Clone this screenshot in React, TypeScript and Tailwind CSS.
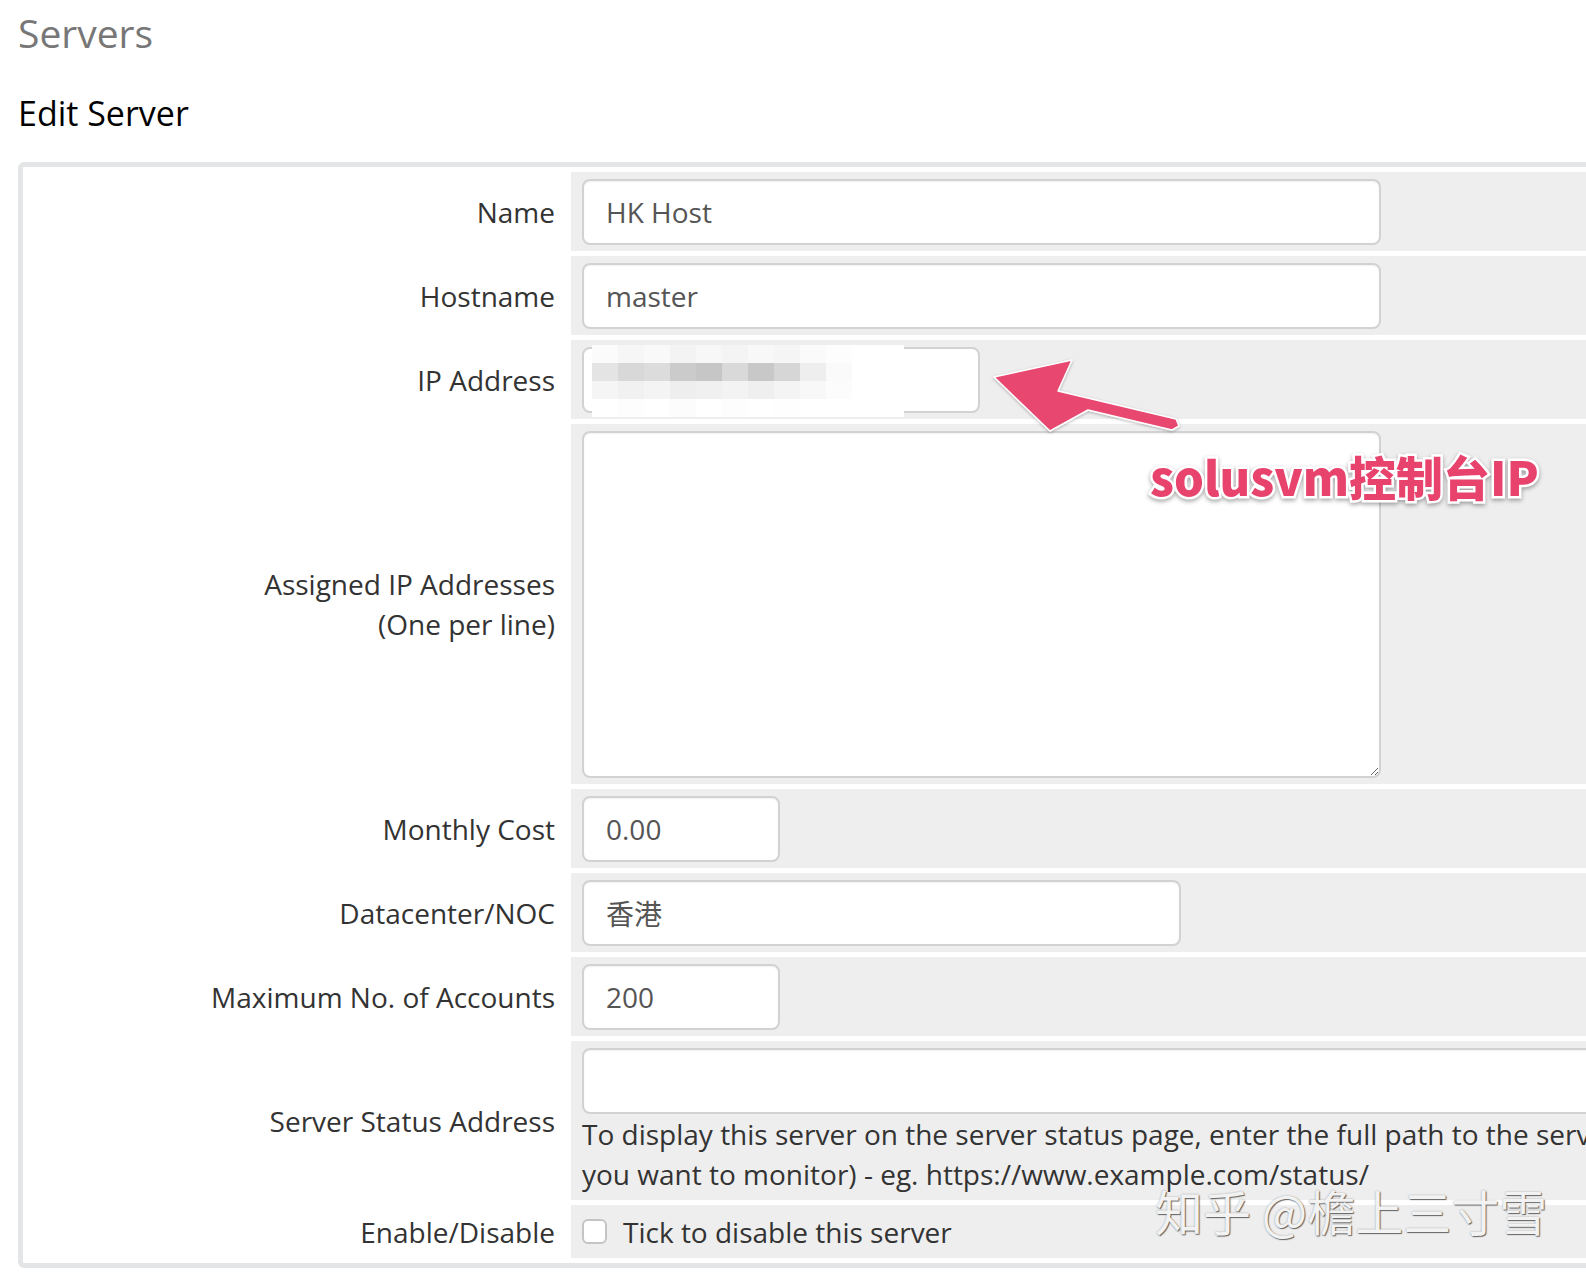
import React from "react";

const font = { fontFamily: '"Open Sans", "Noto Sans CJK SC", sans-serif' };

const mosaic = [
  ["#fbfbfb", "#f6f6f6", "#f9f9f9", "#f3f3f3", "#f7f7f7", "#f4f4f4", "#f8f8f8", "#f5f5f5", "#fafafa", "#fdfdfd", "#ffffff", "#ffffff"],
  ["#e4e4e4", "#d8d8d8", "#dcdcdc", "#cbcbcb", "#c6c6c6", "#d9d9d9", "#c8c8c8", "#d6d6d6", "#eeeeee", "#fafafa", "#ffffff", "#ffffff"],
  ["#f5f5f5", "#f1f1f1", "#f4f4f4", "#eeeeee", "#f0f0f0", "#f3f3f3", "#efefef", "#f4f4f4", "#f8f8f8", "#fcfcfc", "#ffffff", "#ffffff"],
  ["#ffffff", "#fdfdfd", "#ffffff", "#fcfcfc", "#ffffff", "#fdfdfd", "#ffffff", "#fefefe", "#ffffff", "#ffffff", "#ffffff", "#ffffff"],
];

const inputCls =
  "h-[66px] rounded-[8px] border-2 border-[#d2d2d2] bg-white pl-[22px] text-[28px] text-[#555] shadow-[inset_0_1px_2px_rgba(0,0,0,0.06)] outline-none";

function Row({ label, children }: { label: React.ReactNode; children: React.ReactNode }) {
  return (
    <div className="flex">
      <div className="w-[548px] shrink-0 flex items-center justify-end pr-[16px] text-right text-[28px] leading-[40px] text-[#333]">
        {label}
      </div>
      <div className="flex-1 bg-[#eeeeee] pl-[11px] pt-[7px] pb-[6px]">{children}</div>
    </div>
  );
}

export default function App() {
  return (
    <div className="relative w-[1586px] h-[1276px] overflow-hidden bg-white" style={font}>
      <div className="pl-[18px]">
        <div className="h-[66px] leading-[66px] text-[39px] text-[#777]">Servers</div>
        <div className="mt-[27px] leading-[40px] text-[34px] text-black">Edit Server</div>

        <div className="mt-[29px] w-[1800px] rounded-[6px] border-[5px] border-[#e3e5e6] py-[5px]">
          <div className="flex flex-col gap-[5px]">
            <Row label="Name">
              <input readOnly value="HK Host" className={`${inputCls} w-[799px]`} />
            </Row>
            <Row label="Hostname">
              <input readOnly value="master" className={`${inputCls} w-[799px]`} />
            </Row>
            <Row label="IP Address">
              <div className="relative h-[66px] w-[398px] rounded-[8px] border-2 border-[#d2d2d2] bg-white">
                <div className="absolute left-[8px] top-[-4px] flex flex-col">
                  {mosaic.map((r, i) => (
                    <div key={i} className="flex">
                      {r.map((c, j) => (
                        <div key={j} className="h-[18px] w-[26px]" style={{ background: c }} />
                      ))}
                    </div>
                  ))}
                </div>
              </div>
            </Row>
            <Row
              label={
                <span>
                  Assigned IP Addresses
                  <br />
                  (One per line)
                </span>
              }
            >
              <textarea
                readOnly
                className="block h-[347px] w-[799px] rounded-[8px] border-2 border-[#d2d2d2] bg-white shadow-[inset_0_1px_2px_rgba(0,0,0,0.06)] outline-none"
              />
            </Row>
            <Row label="Monthly Cost">
              <input readOnly value="0.00" className={`${inputCls} w-[198px]`} />
            </Row>
            <Row label="Datacenter/NOC">
              <input readOnly value="香港" className={`${inputCls} w-[599px]`} />
            </Row>
            <Row label="Maximum No. of Accounts">
              <input readOnly value="200" className={`${inputCls} w-[198px]`} />
            </Row>
            <Row label="Server Status Address">
              <input readOnly value="" className={`${inputCls} block w-[1200px]`} />
              <div className="whitespace-nowrap text-[28px] leading-[40px] text-[#333]">
                To display this server on the server status page, enter the full path to the server status folder
                (required to be uploaded to each server
                <br />
                you want to monitor) - eg. https://www.example.com/status/
              </div>
            </Row>
            <div className="flex">
              <div className="w-[548px] shrink-0 flex items-center justify-end pr-[16px] text-[28px] text-[#333]">
                Enable/Disable
              </div>
              <div className="flex flex-1 items-center gap-[16px] bg-[#eeeeee] pl-[11px] h-[53px]">
                <div className="h-[25px] w-[25px] rounded-[6px] border-2 border-[#c4c4c4] bg-white" />
                <span className="text-[28px] text-[#333]">Tick to disable this server</span>
              </div>
            </div>
          </div>
        </div>
      </div>

      {/* annotation arrow */}
      <svg className="absolute left-0 top-0" width="1586" height="1276" viewBox="0 0 1586 1276">
        <defs>
          <filter id="sh" x="-20%" y="-20%" width="140%" height="140%">
            <feDropShadow dx="0" dy="1" stdDeviation="1.5" floodColor="#000" floodOpacity="0.3" />
          </filter>
        </defs>
        <polygon
          points="994,377 1072,360 1058,391 1176,419 1179,426 1172,430 1088,410 1050,431"
          fill="#e8466f"
          stroke="#fff"
          strokeWidth="1.5"
          strokeLinejoin="round"
          filter="url(#sh)"
        />
      </svg>

      <div
        className="absolute left-[1150px] top-[446px] whitespace-nowrap text-[47px] font-black leading-[60px] text-[#e8436d] [-webkit-text-stroke:5px_#fff] [paint-order:stroke_fill] [filter:drop-shadow(0_2px_2px_rgba(0,0,0,0.35))]"
        style={{ fontFamily: '"Noto Sans CJK SC", sans-serif' }}
      >
        solusvm控制台IP
      </div>

      <div
        className="absolute left-[1155px] top-[1180px] whitespace-nowrap text-[48px] leading-[60px] text-[#f2f2f2] [text-shadow:1px_1px_1px_rgba(0,0,0,0.55),0_0_2px_rgba(0,0,0,0.3)]"
        style={{ fontFamily: '"Noto Sans CJK SC", sans-serif' }}
      >
        知乎 @檐上三寸雪
      </div>
    </div>
  );
}
